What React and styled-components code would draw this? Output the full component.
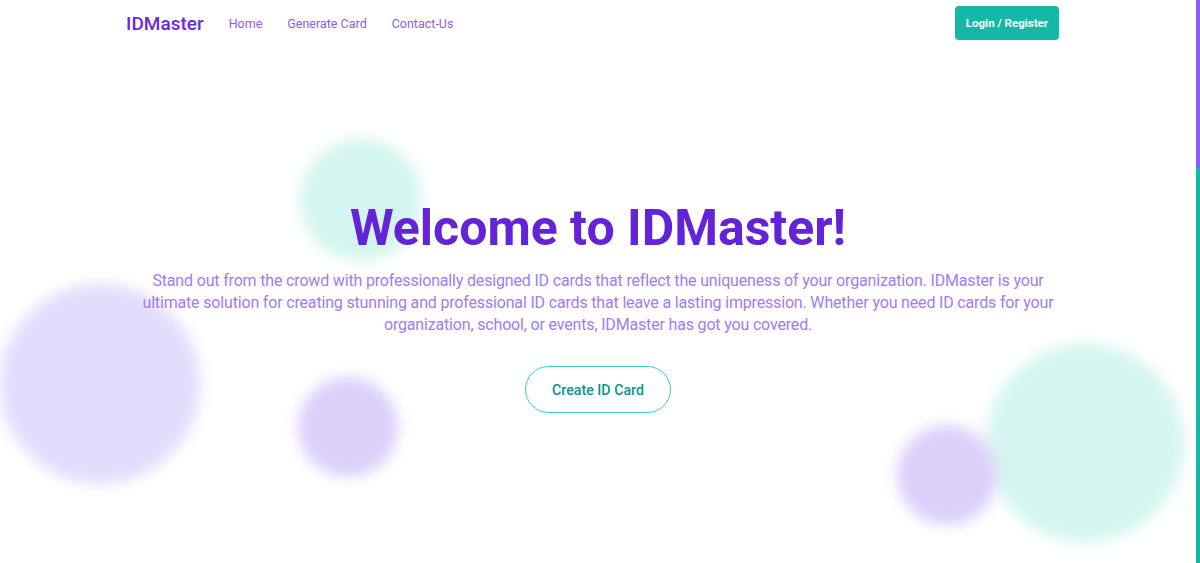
import React from "react";
import styled, { createGlobalStyle } from "styled-components";

const GlobalStyle = createGlobalStyle`
  * {
    box-sizing: border-box;
  }
  html, body {
    margin: 0;
    padding: 0;
    background: #ffffff;
    font-family: Roboto, "Noto Sans", sans-serif;
  }
`;

const Page = styled.div`
  display: flex;
  height: 100vh;
  overflow: hidden;
`;

const Main = styled.div`
  flex: 1;
  position: relative;
  overflow: hidden;
  background: #ffffff;
`;

const ScrollRail = styled.div`
  width: 4px;
  background: #14b8a6;
  display: flex;
  flex-direction: column;
`;

const ScrollThumb = styled.div`
  height: 168px;
  background: #8b5cf6;
`;

// soft background bubbles, centred on ($x, $y)
const Blob = styled.div`
  position: absolute;
  border-radius: 50%;
  filter: blur(7px);
  z-index: 0;
  left: ${({ $x, $size }) => $x - $size / 2}px;
  top: ${({ $y, $size }) => $y - $size / 2}px;
  width: ${({ $size }) => $size}px;
  height: ${({ $size }) => $size}px;
  background: ${({ $color }) => $color};
`;

const Navbar = styled.nav`
  position: relative;
  z-index: 1;
  height: 46px;
  padding: 0 137px 0 126px;
  display: flex;
  align-items: center;
  justify-content: space-between;
`;

const NavLeft = styled.div`
  display: flex;
  align-items: center;
  gap: 25px;
`;

const Brand = styled.div`
  font-size: 19px;
  font-weight: 500;
  color: #6d28d9;
`;

const NavLink = styled.a`
  font-size: 12.5px;
  color: #8b5cf6;
  text-decoration: none;
  cursor: pointer;
`;

const LoginButton = styled.button`
  height: 34px;
  padding: 0 11px;
  border: none;
  border-radius: 4px;
  background: #14b8a6;
  color: #ffffff;
  font-family: inherit;
  font-size: 11.5px;
  font-weight: 700;
  cursor: pointer;
`;

const Hero = styled.section`
  position: relative;
  z-index: 1;
  padding-top: 152px;
  display: flex;
  flex-direction: column;
  align-items: center;
  text-align: center;
`;

const Title = styled.h1`
  margin: 0;
  font-size: 50px;
  line-height: 60px;
  font-weight: 700;
  color: #6423d6;
`;

const Lead = styled.p`
  margin: 12px 0 0;
  max-width: 925px;
  font-size: 16px;
  line-height: 22px;
  letter-spacing: -0.17px;
  color: #a07cf5;
`;

const OutlineButton = styled.button`
  margin-top: 30px;
  height: 47px;
  padding: 0 26px;
  border: 1px solid #2dd4bf;
  border-radius: 24px;
  background: transparent;
  color: #0d9488;
  font-family: inherit;
  font-size: 14.2px;
  font-weight: 500;
  cursor: pointer;
`;

const blobs = [
  { x: 361, y: 200, size: 122, color: "#d4f5ef" },
  { x: 100, y: 384, size: 200, color: "#e3dcfd" },
  { x: 348, y: 427, size: 100, color: "#dcd0fb" },
  { x: 1085, y: 443, size: 198, color: "#d4f5f0" },
  { x: 947, y: 475, size: 100, color: "#dcd0fb" },
];

export default function App() {
  return (
    <>
      <GlobalStyle />
      <Page>
        <Main>
          {blobs.map((b, i) => (
            <Blob key={i} $x={b.x} $y={b.y} $size={b.size} $color={b.color} />
          ))}
          <Navbar>
            <NavLeft>
              <Brand>IDMaster</Brand>
              <NavLink>Home</NavLink>
              <NavLink>Generate Card</NavLink>
              <NavLink>Contact-Us</NavLink>
            </NavLeft>
            <LoginButton>Login / Register</LoginButton>
          </Navbar>
          <Hero>
            <Title>Welcome to IDMaster!</Title>
            <Lead>
              Stand out from the crowd with professionally designed ID cards
              that reflect the uniqueness of your organization. IDMaster is
              your ultimate solution for creating stunning and professional ID
              cards that leave a lasting impression. Whether you need ID cards
              for your organization, school, or events, IDMaster has got you
              covered.
            </Lead>
            <OutlineButton>Create ID Card</OutlineButton>
          </Hero>
        </Main>
        <ScrollRail>
          <ScrollThumb />
        </ScrollRail>
      </Page>
    </>
  );
}
